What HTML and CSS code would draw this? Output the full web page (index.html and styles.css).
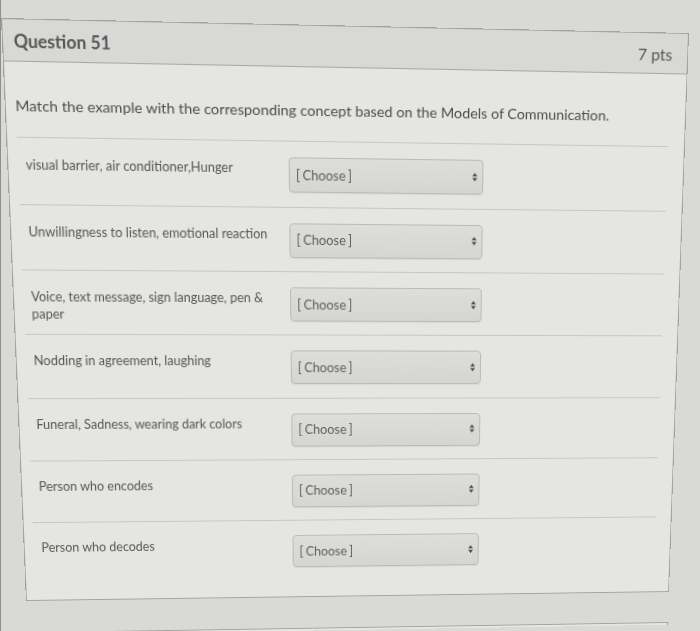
FILE: index.html
```html
<!DOCTYPE html>
<html lang="en">
<head>
<meta charset="utf-8">
<title>Question 51</title>
<link rel="stylesheet" href="styles.css">
</head>
<body>
<div class="stage">
  <section class="card">
    <header class="card-header">
      <h2 class="q-title">Question 51</h2>
      <span class="q-points">7 pts</span>
    </header>
    <div class="card-body">
      <p class="q-text">Match the example with the corresponding concept based on the Models of Communication.</p>
      <div class="match-row">
        <div class="match-label">visual barrier, air conditioner,Hunger</div>
        <div class="match-select"><span>[ Choose ]</span><svg class="arrows" viewBox="0 0 6 10" width="5" height="10"><path d="M0 4 L3 0 L6 4 Z M0 6 L3 10 L6 6 Z"/></svg></div>
      </div>
      <div class="match-row">
        <div class="match-label">Unwillingness to listen, emotional reaction</div>
        <div class="match-select"><span>[ Choose ]</span><svg class="arrows" viewBox="0 0 6 10" width="5" height="10"><path d="M0 4 L3 0 L6 4 Z M0 6 L3 10 L6 6 Z"/></svg></div>
      </div>
      <div class="match-row">
        <div class="match-label">Voice, text message, sign language, pen &amp; paper</div>
        <div class="match-select"><span>[ Choose ]</span><svg class="arrows" viewBox="0 0 6 10" width="5" height="10"><path d="M0 4 L3 0 L6 4 Z M0 6 L3 10 L6 6 Z"/></svg></div>
      </div>
      <div class="match-row">
        <div class="match-label">Nodding in agreement, laughing</div>
        <div class="match-select"><span>[ Choose ]</span><svg class="arrows" viewBox="0 0 6 10" width="5" height="10"><path d="M0 4 L3 0 L6 4 Z M0 6 L3 10 L6 6 Z"/></svg></div>
      </div>
      <div class="match-row">
        <div class="match-label">Funeral, Sadness, wearing dark colors</div>
        <div class="match-select"><span>[ Choose ]</span><svg class="arrows" viewBox="0 0 6 10" width="5" height="10"><path d="M0 4 L3 0 L6 4 Z M0 6 L3 10 L6 6 Z"/></svg></div>
      </div>
      <div class="match-row">
        <div class="match-label">Person who encodes</div>
        <div class="match-select"><span>[ Choose ]</span><svg class="arrows" viewBox="0 0 6 10" width="5" height="10"><path d="M0 4 L3 0 L6 4 Z M0 6 L3 10 L6 6 Z"/></svg></div>
      </div>
      <div class="match-row">
        <div class="match-label">Person who decodes</div>
        <div class="match-select"><span>[ Choose ]</span><svg class="arrows" viewBox="0 0 6 10" width="5" height="10"><path d="M0 4 L3 0 L6 4 Z M0 6 L3 10 L6 6 Z"/></svg></div>
      </div>
    </div>
  </section>
  <section class="card card-next"></section>
</div>
</body>
</html>
```
FILE: styles.css
```css
html, body {
  overflow: hidden;
}
html {
  background: #d9dad7;
}
body {
  margin: 0;
  height: 100vh;
  font-family: Lato, "Liberation Sans", sans-serif;
  color: #555;
  box-shadow: inset 1px 0 0 #8e8f8c;
}
.stage {
  width: 668px;
  transform-origin: 0 0;
  transform: matrix3d(1.075409, 0.024633, 0, 0.000065993, 0.046949, 1.094204, 0, 0.00012475, 0, 0, 1, 0, 1, 18, 0, 1);
}
.card {
  box-sizing: border-box;
  width: 668px;
  height: 572px;
  border: 1px solid #a3a4a1;
  background: #e5e6e3;
}
.card-header {
  box-sizing: border-box;
  height: 39px;
  display: flex;
  justify-content: space-between;
  align-items: baseline;
  padding: 9px 15px 0 10px;
  background: #d8d9d6;
  border-bottom: 1px solid #a9aaa7;
}
.q-title {
  margin: 0;
  font-size: 16.5px;
  line-height: 20px;
  font-weight: 700;
  color: #555655;
}
.q-points {
  font-size: 16px;
  line-height: 21px;
  color: #555;
}
.card-body {
  padding: 0 16px 0 9px;
}
.q-text {
  margin: 0;
  padding: 30.8px 0 19.7px;
  font-size: 14.3px;
  line-height: 20px;
  color: #4e4e4e;
}
.match-row {
  box-sizing: border-box;
  height: 63.3px;
  border-top: 1px solid #c6c7c4;
  display: flex;
  align-items: flex-start;
  gap: 8px;
  padding-left: 7.5px;
}
.match-label {
  flex: none;
  width: 245.5px;
  padding-top: 17px;
  font-size: 12.5px;
  line-height: 17.3px;
  color: #575757;
}
.match-select {
  flex: none;
  box-sizing: border-box;
  width: 193px;
  height: 34px;
  margin-top: 15px;
  display: flex;
  align-items: center;
  justify-content: space-between;
  padding: 0 5px 1px 6px;
  border: 1px solid #babbb8;
  border-radius: 4px;
  background: linear-gradient(#dddedb, #d5d6d3);
  box-shadow: 0 1px 1px rgba(0, 0, 0, 0.06);
  font-size: 12.8px;
  word-spacing: -0.8px;
  color: #5e5e5e;
}
.arrows {
  fill: #505050;
}
.card-next {
  height: 3px;
  margin-top: 33px;
  border-bottom: none;
}
```
